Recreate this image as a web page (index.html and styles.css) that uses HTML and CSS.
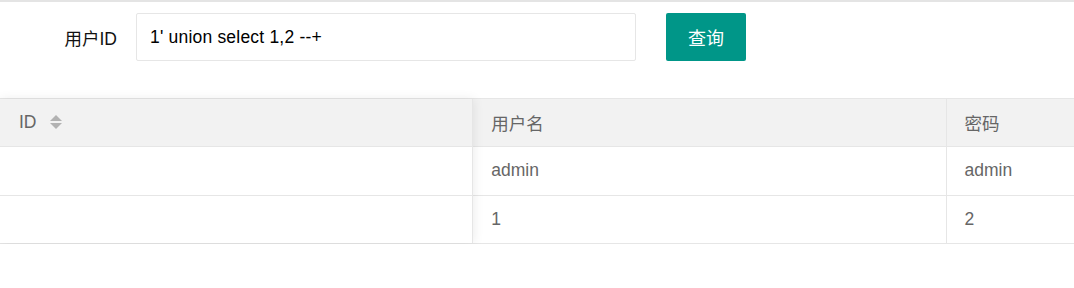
FILE: index.html
```html
<!DOCTYPE html>
<html lang="zh-CN">
<head>
  <meta charset="UTF-8">
  <meta name="viewport" content="width=device-width, initial-scale=1.0">
  <link rel="stylesheet" href="styles.css">
  <title>用户查询</title>
</head>
<body>
  <form class="search-form">
    <label class="form-label" for="uid">用户ID</label>
    <input class="form-input" id="uid" type="text" value="1' union select 1,2 --+">
    <button class="btn" type="button">查询</button>
  </form>

  <div class="table-box">
    <table class="grid grid-fixed">
      <thead>
        <tr><th class="col-id">ID <span class="sort"><i class="sort-up"></i><i class="sort-down"></i></span></th></tr>
      </thead>
      <tbody>
        <tr><td class="col-id"></td></tr>
        <tr><td class="col-id"></td></tr>
      </tbody>
    </table>
    <table class="grid grid-main">
      <thead>
        <tr><th class="col-name">用户名</th><th class="col-pass">密码</th></tr>
      </thead>
      <tbody>
        <tr><td class="col-name">admin</td><td class="col-pass">admin</td></tr>
        <tr><td class="col-name">1</td><td class="col-pass">2</td></tr>
      </tbody>
    </table>
  </div>
</body>
</html>
```

FILE: styles.css
```css
:root {
  --line: #e6e6e6;
  --head-bg: #f2f2f2;
  --text: #666;
  --green: #009688;
}

body {
  margin: 0;
  padding: 0;
  border-top: 2px solid #e4e4e4;
  font-family: "Liberation Sans", Arial, "Noto Sans CJK SC", sans-serif;
  font-size: 17.5px;
  color: #000;
  background: #fff;
  overflow: hidden;
}

.search-form {
  display: flex;
  align-items: center;
  margin-top: 11px;
  height: 48px;
}

.form-label {
  width: 117px;
  text-align: right;
  margin-right: 19px;
  color: #111;
}

.form-input {
  box-sizing: border-box;
  width: 500px;
  height: 48px;
  border: 1px solid var(--line);
  border-radius: 2px;
  padding: 0 13px;
  font: inherit;
  letter-spacing: 0.2px;
  color: #000;
  outline: none;
}

.btn {
  box-sizing: border-box;
  width: 80px;
  height: 48px;
  margin-left: 30px;
  border: 0;
  border-radius: 2px;
  background: var(--green);
  color: #fff;
  font: inherit;
  font-size: 18px;
}

.table-box {
  display: flex;
  margin-top: 37px;
  border-top: 1px solid var(--line);
  border-bottom: 1px solid var(--line);
  width: 1200px;
}

.grid {
  border-collapse: collapse;
  color: var(--text);
}

.grid th,
.grid td {
  box-sizing: border-box;
  padding: 0 18px;
  text-align: left;
  font-weight: normal;
  border-bottom: 1px solid var(--line);
}

.grid td {
  height: 49px;
}

.grid tbody tr:last-child td {
  border-bottom: 0;
  height: 48px;
}

.grid th {
  background: var(--head-bg);
  height: 47px;
}

.grid-fixed {
  position: relative;
  z-index: 1;
  background: #fff;
  box-shadow: 1px 0 10px rgba(0, 0, 0, 0.08);
}

.grid-fixed th,
.grid-fixed td {
  border-right: 1px solid var(--line);
}

.col-id {
  width: 473px;
  padding-left: 19px !important;
}

.col-name {
  width: 473px;
  border-right: 1px solid var(--line);
}

.col-pass {
  width: 254px;
}

.sort {
  display: inline-flex;
  flex-direction: column;
  gap: 2px;
  margin-left: 9px;
  vertical-align: middle;
  position: relative;
  top: -1px;
}

.sort i {
  width: 0;
  height: 0;
  border-left: 6px solid transparent;
  border-right: 6px solid transparent;
}

.sort-up {
  border-bottom: 6px solid #b2b2b2;
}

.sort-down {
  border-top: 6px solid #b2b2b2;
}
```
